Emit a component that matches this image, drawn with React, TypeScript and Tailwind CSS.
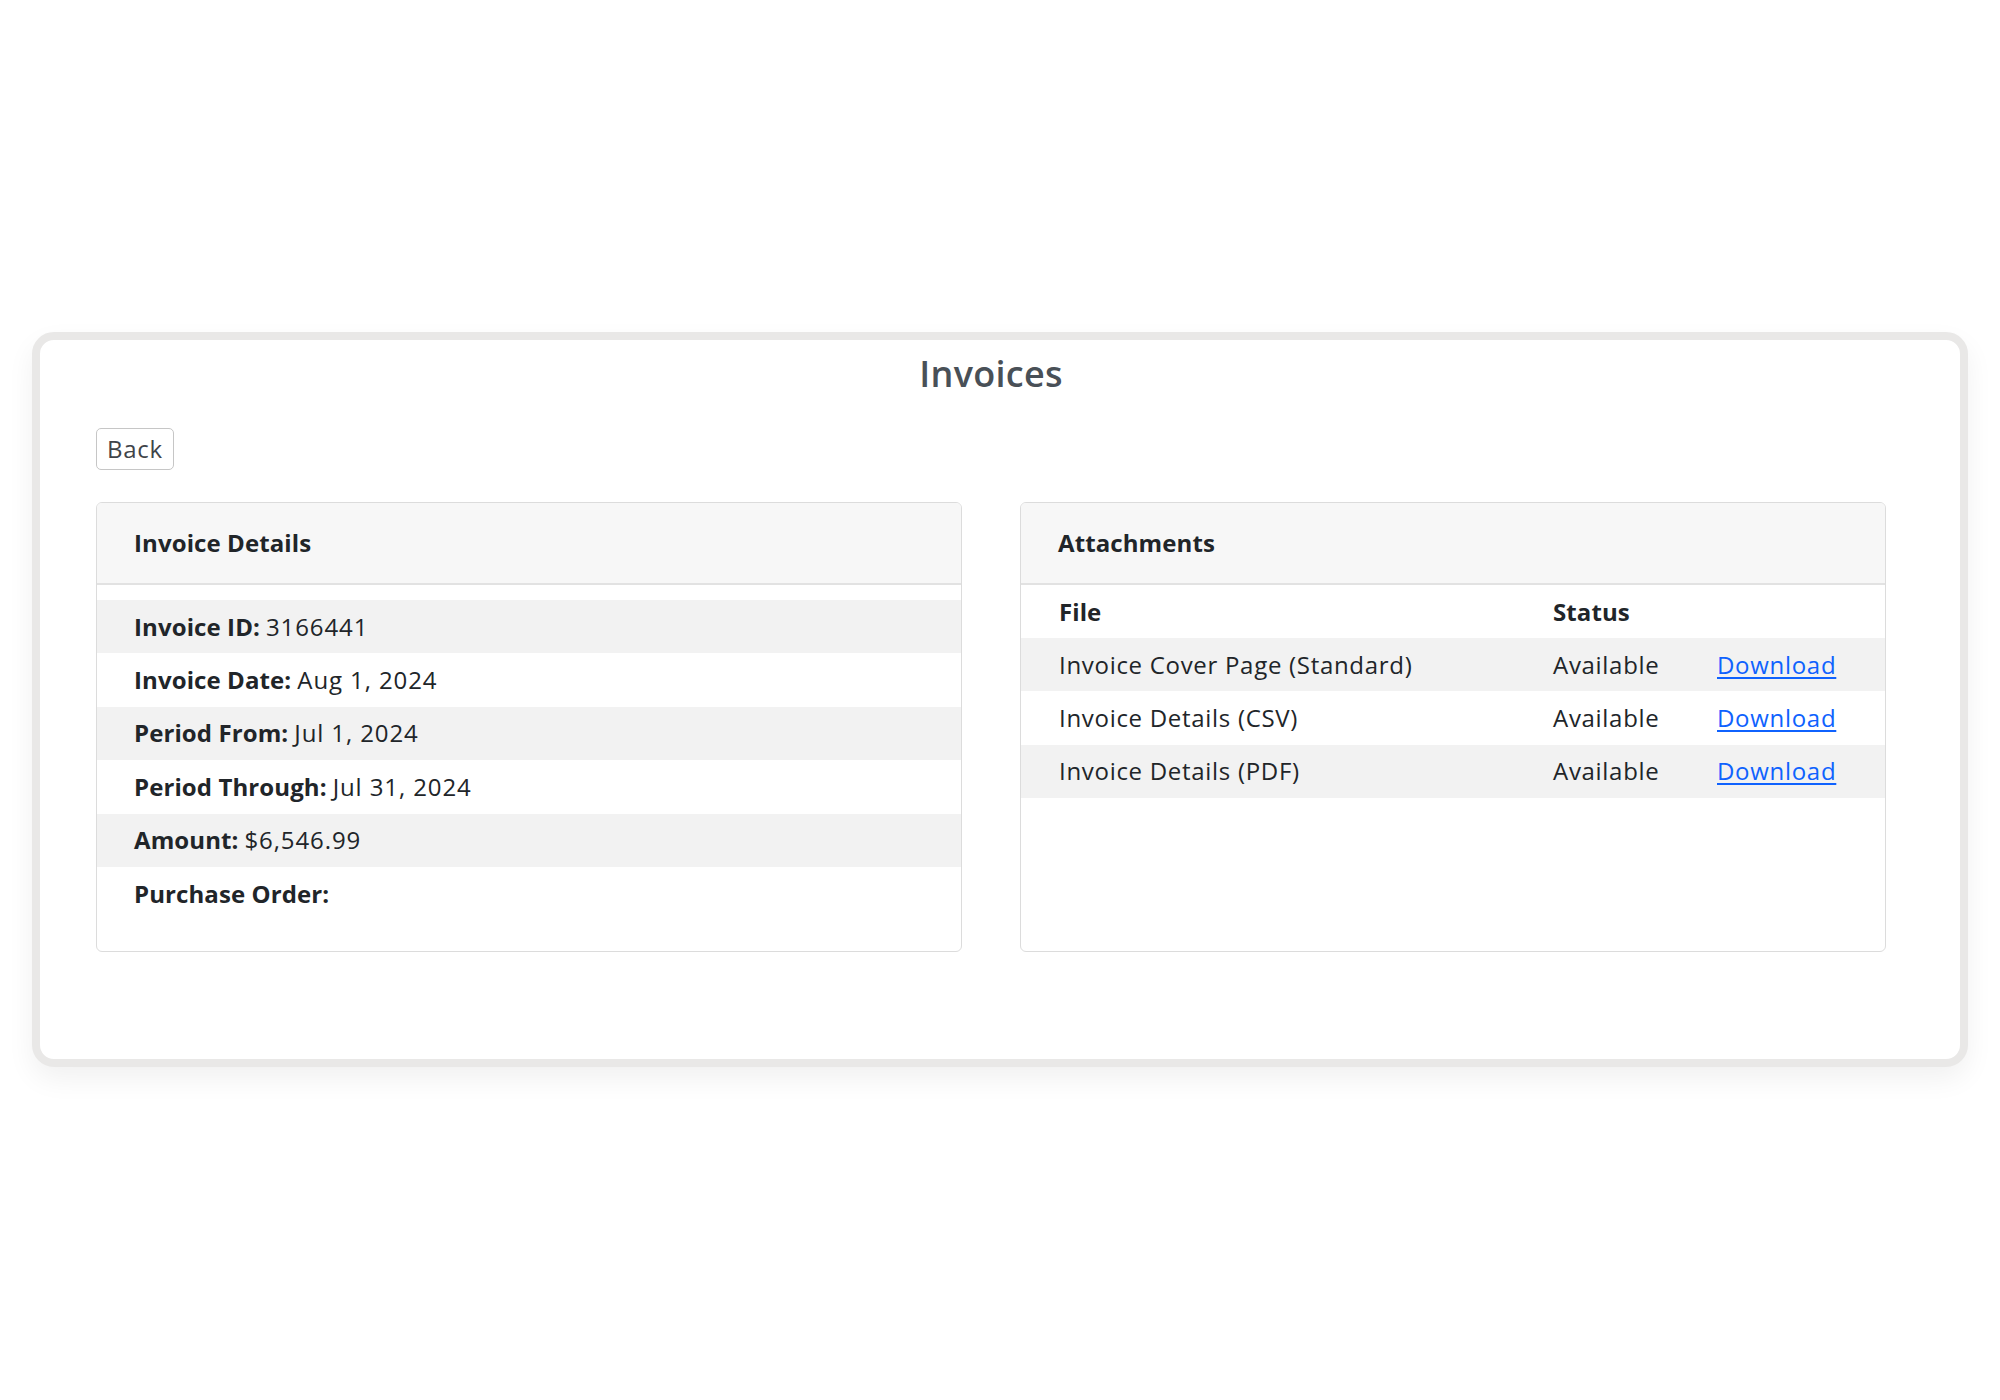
import { FC } from 'react';

interface DetailRow {
  label: string;
  value: string;
}

interface AttachmentRow {
  file: string;
  status: string;
}

const details: DetailRow[] = [
  { label: 'Invoice ID:', value: '3166441' },
  { label: 'Invoice Date:', value: 'Aug 1, 2024' },
  { label: 'Period From:', value: 'Jul 1, 2024' },
  { label: 'Period Through:', value: 'Jul 31, 2024' },
  { label: 'Amount:', value: '$6,546.99' },
  { label: 'Purchase Order:', value: '' }
];

const attachments: AttachmentRow[] = [
  { file: 'Invoice Cover Page (Standard)', status: 'Available' },
  { file: 'Invoice Details (CSV)', status: 'Available' },
  { file: 'Invoice Details (PDF)', status: 'Available' }
];

const Panel: FC<{ title: string; children: React.ReactNode }> = ({
  title,
  children
}) => (
  <div className="flex flex-col rounded-[6px] border border-[#dcdcdc] bg-white overflow-hidden">
    <div className="flex h-[82px] items-center border-b-2 border-[#e2e2e2] bg-[#f7f7f7] pl-[37px] font-bold tracking-[0.1px]">
      {title}
    </div>
    {children}
  </div>
);

const InvoiceDetails: FC = () => (
  <Panel title="Invoice Details">
    <div className="pt-[15px] pb-[31px]">
      {details.map((row, i) => (
        <div
          key={row.label}
          className={
            i % 2 === 0
              ? 'flex h-[53.4px] items-center bg-[#f2f2f2] pl-[37px]'
              : 'flex h-[53.4px] items-center pl-[37px]'
          }
        >
          <span className="font-bold tracking-[0.1px]">{row.label}</span>
          {row.value && <span className="ml-[6px] tracking-[0.9px]">{row.value}</span>}
        </div>
      ))}
    </div>
  </Panel>
);

const Attachments: FC = () => (
  <Panel title="Attachments">
    <div className="grid h-[53px] grid-cols-[494px_164px_1fr] items-center pl-[38px] font-bold tracking-[0.1px]">
      <span>File</span>
      <span>Status</span>
      <span />
    </div>
    {attachments.map((row, i) => (
      <div
        key={row.file}
        className={
          i % 2 === 0
            ? 'grid h-[53.4px] grid-cols-[494px_164px_1fr] items-center bg-[#f2f2f2] pl-[38px]'
            : 'grid h-[53.4px] grid-cols-[494px_164px_1fr] items-center pl-[38px]'
        }
      >
        <span>{row.file}</span>
        <span>{row.status}</span>
        <a href="#" className="text-[#0f62fe] underline underline-offset-[3px]">
          Download
        </a>
      </div>
    ))}
  </Panel>
);

export default function App() {
  return (
    <div className="min-h-[1400px] bg-white px-[32px] pt-[332px] text-[24px] tracking-[0.7px] text-[#212529] [font-family:'Open_Sans','Noto_Sans',sans-serif]">
      <div className="rounded-[22px] border-8 border-[#e9e8e7] bg-white pb-[107px] shadow-[0_12px_28px_rgba(0,0,0,0.06)]">
        <div className="pl-[56px] pr-[74px] pt-[12px]">
          <h1 className="text-center text-[36px] font-semibold leading-[44px] tracking-[0.3px] text-[#495057]">
            Invoices
          </h1>
          <button className="mt-[32px] h-[42px] rounded-[5px] border border-[#c6c6c6] bg-white px-[10px] text-[24px] leading-none text-[#3f4449]">
            Back
          </button>
          <div className="mt-[32px] grid grid-cols-2 gap-[58px]">
            <InvoiceDetails />
            <Attachments />
          </div>
        </div>
      </div>
    </div>
  );
}
